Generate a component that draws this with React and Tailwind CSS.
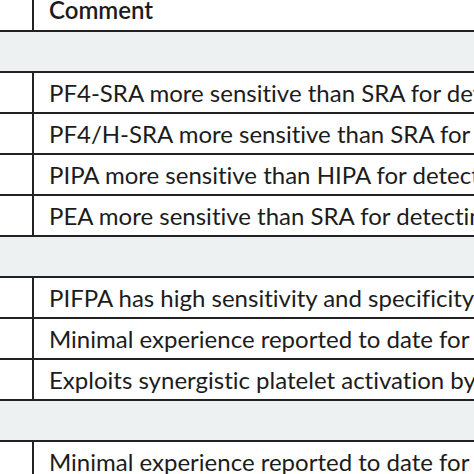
export default function App() {
  const rows = [
    { gray: true },
    { text: 'PF4-SRA more sensitive than SRA for detecting HIT antibodies' },
    { text: 'PF4/H-SRA more sensitive than SRA for detecting HIT antibodies' },
    { text: 'PIPA more sensitive than HIPA for detecting HIT antibodies' },
    { text: 'PEA more sensitive than SRA for detecting HIT antibodies' },
    { gray: true },
    { text: 'PIFPA has high sensitivity and specificity for HIT' },
    { text: 'Minimal experience reported to date for this assay' },
    { text: 'Exploits synergistic platelet activation by PF4 and heparin' },
    { gray: true },
    { text: 'Minimal experience reported to date for this assay' },
  ];

  return (
    <div
      className="w-[474px] h-[474px] overflow-hidden bg-white text-[#1c1c1c] [font-variant-ligatures:none]"
      style={{ fontFamily: 'Lato, "Open Sans", sans-serif' }}
    >
      <div className="-mt-[11px] w-[700px]">
        <div className="flex h-[43px] border-b-2 border-[#222]">
          <div className="w-[34px] shrink-0 border-r-2 border-[#222]" />
          <div className="flex items-center pl-[15px] text-[24px] font-semibold whitespace-nowrap">Comment</div>
        </div>
        {rows.map((r, i) =>
          r.gray ? (
            <div key={i} className="h-[41px] bg-[#eef1f2] border-b-2 border-[#222]" />
          ) : (
            <div key={i} className="flex h-[41px] border-b-2 border-[#222]">
              <div className="w-[34px] shrink-0 border-r-2 border-[#222]" />
              <div className="flex items-center pl-[15px] pt-[1px] text-[24px] whitespace-nowrap">{r.text}</div>
            </div>
          )
        )}
      </div>
    </div>
  );
}
